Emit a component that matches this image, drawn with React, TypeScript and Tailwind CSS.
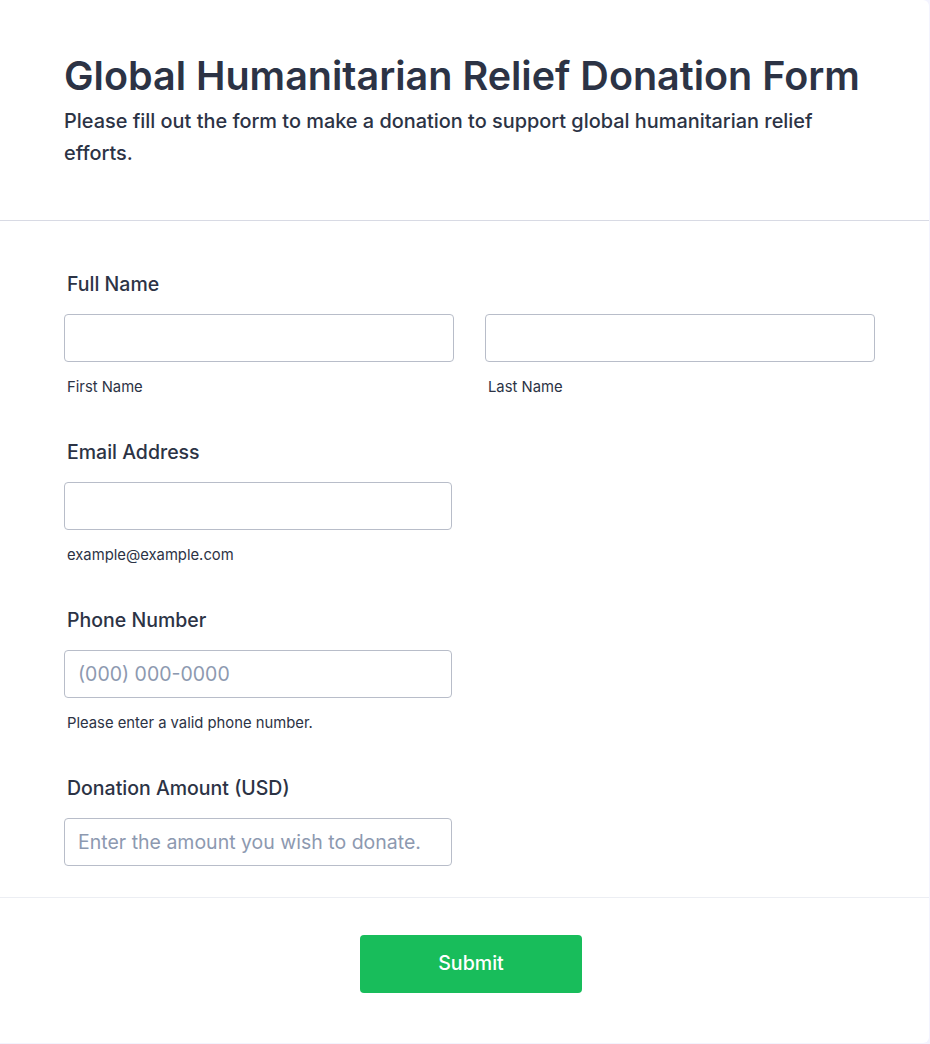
import React from 'react';

const font = { fontFamily: 'Inter, "Noto Sans", sans-serif' };

interface FieldProps {
  label: string;
  hint?: string;
  placeholder?: string;
}

function Field({ label, hint, placeholder }: FieldProps) {
  return (
    <div className="flex flex-col">
      <label className="pl-[3px] text-[19.5px] leading-6 font-medium text-[#2c3345]">{label}</label>
      <input
        placeholder={placeholder}
        className="mt-[18px] h-12 w-[388px] rounded-[4px] border border-[#b8bdc9] bg-white px-[13px] text-[19.5px] text-[#2c3345] outline-none placeholder:text-[#8d99b0]"
      />
      {hint && <span className="mt-[15px] pl-[3px] text-[14.8px] leading-5 text-[#2c3345]">{hint}</span>}
    </div>
  );
}

export default function App() {
  return (
    <div className="min-h-screen bg-[#f3f3fe]" style={font}>
      <div className="w-[929px] overflow-hidden rounded-br-[6px] rounded-tr-[6px] bg-white">
        {/* Header */}
        <div className="border-b border-[#d8dae4] pl-16 pr-[54px] pt-[52px] pb-[51px]">
          <h1 className="text-[39.5px] leading-[48px] font-semibold text-[#2c3345]">
            Global Humanitarian Relief Donation Form
          </h1>
          <p className="mt-[5px] max-w-[770px] text-[19.9px] leading-8 font-medium text-[#2c3345]">
            Please fill out the form to make a donation to support global humanitarian relief efforts.
          </p>
        </div>

        {/* Fields */}
        <div className="flex flex-col gap-[43px] pl-16 pr-[54px] pt-[51px] pb-[31px]">
          <div className="flex flex-col">
            <label className="pl-[3px] text-[19.5px] leading-6 font-medium text-[#2c3345]">Full Name</label>
            <div className="mt-[18px] grid grid-cols-2 gap-[31px]">
              <div className="flex flex-col">
                <input className="h-12 rounded-[4px] border border-[#b8bdc9] bg-white px-[13px] text-[19.5px] outline-none" />
                <span className="mt-[15px] pl-[3px] text-[14.8px] leading-5 text-[#2c3345]">First Name</span>
              </div>
              <div className="flex flex-col">
                <input className="h-12 rounded-[4px] border border-[#b8bdc9] bg-white px-[13px] text-[19.5px] outline-none" />
                <span className="mt-[15px] pl-[3px] text-[14.8px] leading-5 text-[#2c3345]">Last Name</span>
              </div>
            </div>
          </div>
          <Field label="Email Address" hint="example@example.com" />
          <Field label="Phone Number" hint="Please enter a valid phone number." placeholder="(000) 000-0000" />
          <Field label="Donation Amount (USD)" placeholder="Enter the amount you wish to donate." />
        </div>

        {/* Footer */}
        <div className="flex justify-center border-t border-[#eceef3] pt-[37px] pb-[50px] pl-[13px]">
          <button className="h-[58px] w-[222px] rounded-[4px] bg-[#18bd5b] text-[19.6px] font-medium text-white">
            Submit
          </button>
        </div>
      </div>
    </div>
  );
}
